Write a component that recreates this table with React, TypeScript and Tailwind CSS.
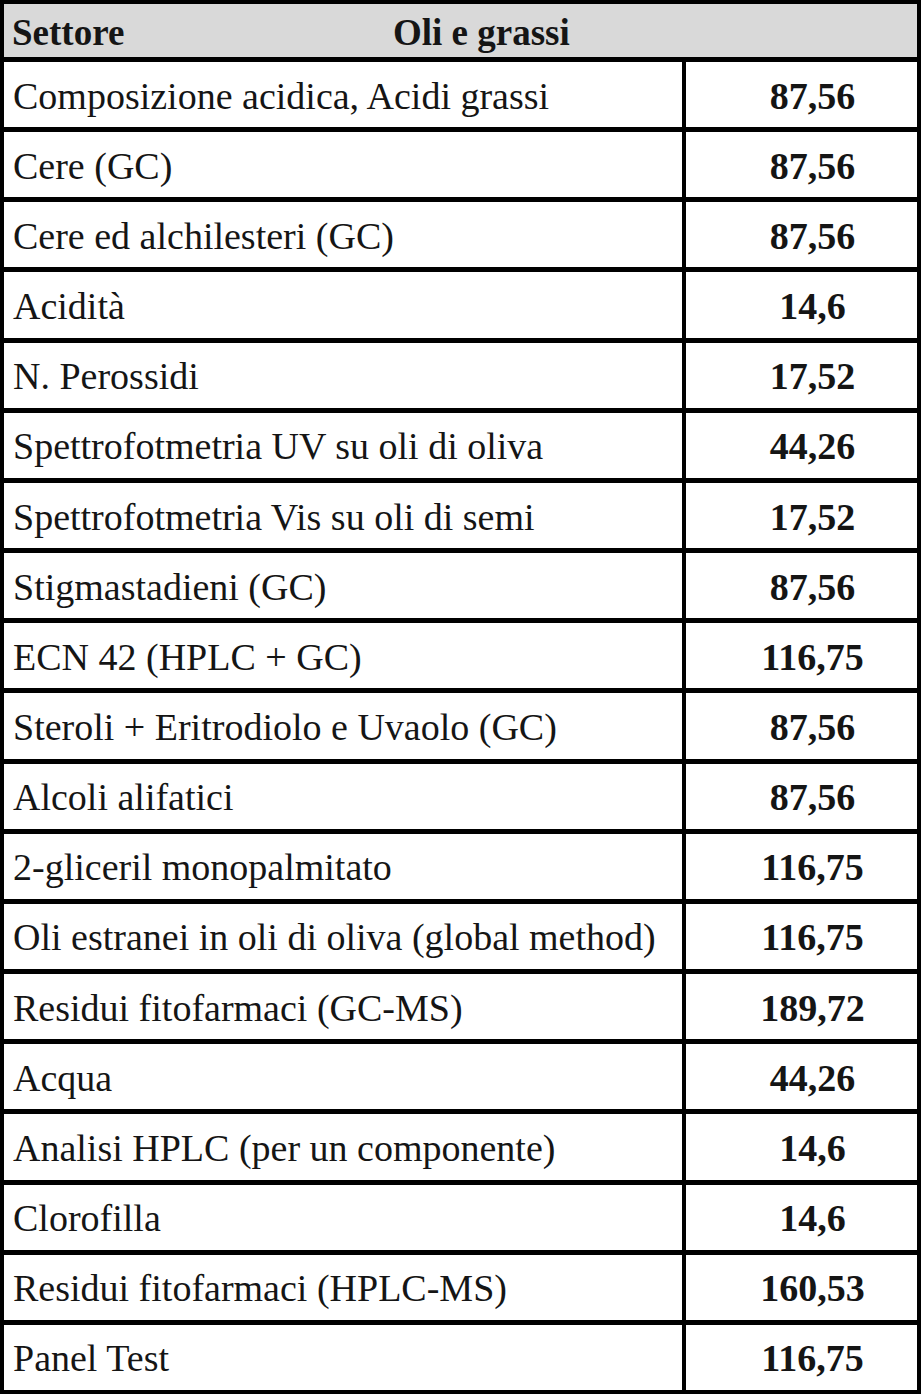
import React from 'react';

const rows: [string, string][] = [
  ['Composizione acidica, Acidi grassi', '87,56'],
  ['Cere (GC)', '87,56'],
  ['Cere ed alchilesteri (GC)', '87,56'],
  ['Acidità', '14,6'],
  ['N. Perossidi', '17,52'],
  ['Spettrofotmetria UV su oli di oliva', '44,26'],
  ['Spettrofotmetria Vis su oli di semi', '17,52'],
  ['Stigmastadieni (GC)', '87,56'],
  ['ECN 42 (HPLC + GC)', '116,75'],
  ['Steroli + Eritrodiolo e Uvaolo (GC)', '87,56'],
  ['Alcoli alifatici', '87,56'],
  ['2-gliceril monopalmitato', '116,75'],
  ['Oli estranei in oli di oliva (global method)', '116,75'],
  ['Residui fitofarmaci (GC-MS)', '189,72'],
  ['Acqua', '44,26'],
  ['Analisi HPLC (per un componente)', '14,6'],
  ['Clorofilla', '14,6'],
  ['Residui fitofarmaci (HPLC-MS)', '160,53'],
  ['Panel Test', '116,75'],
];

export default function App() {
  return (
    <div
      className="w-[921px] h-[1394px] bg-white border-4 border-black flex flex-col text-[#151515]"
      style={{ fontFamily: '"Liberation Serif", "Times New Roman", serif' }}
    >
      {/* Header */}
      <div className="h-[53px] shrink-0 bg-[#d9d9d9] flex items-center pl-[8px] pt-[3px] text-[37px] font-bold leading-none">
        <span className="w-[381px]">Settore</span>
        <span>Oli e grassi</span>
      </div>

      {/* Rows */}
      {rows.map(([name, price], i) => (
        <div key={i} className="flex-1 flex border-t-[5px] border-black">
          <div className="w-[678px] flex items-center pl-[9px] pt-[2px] text-[38px] leading-none whitespace-nowrap">
            {name}
          </div>
          <div className="flex-1 flex items-center justify-center pl-[22px] pt-[2px] border-l-4 border-black text-[38px] font-bold leading-none">
            {price}
          </div>
        </div>
      ))}
    </div>
  );
}
